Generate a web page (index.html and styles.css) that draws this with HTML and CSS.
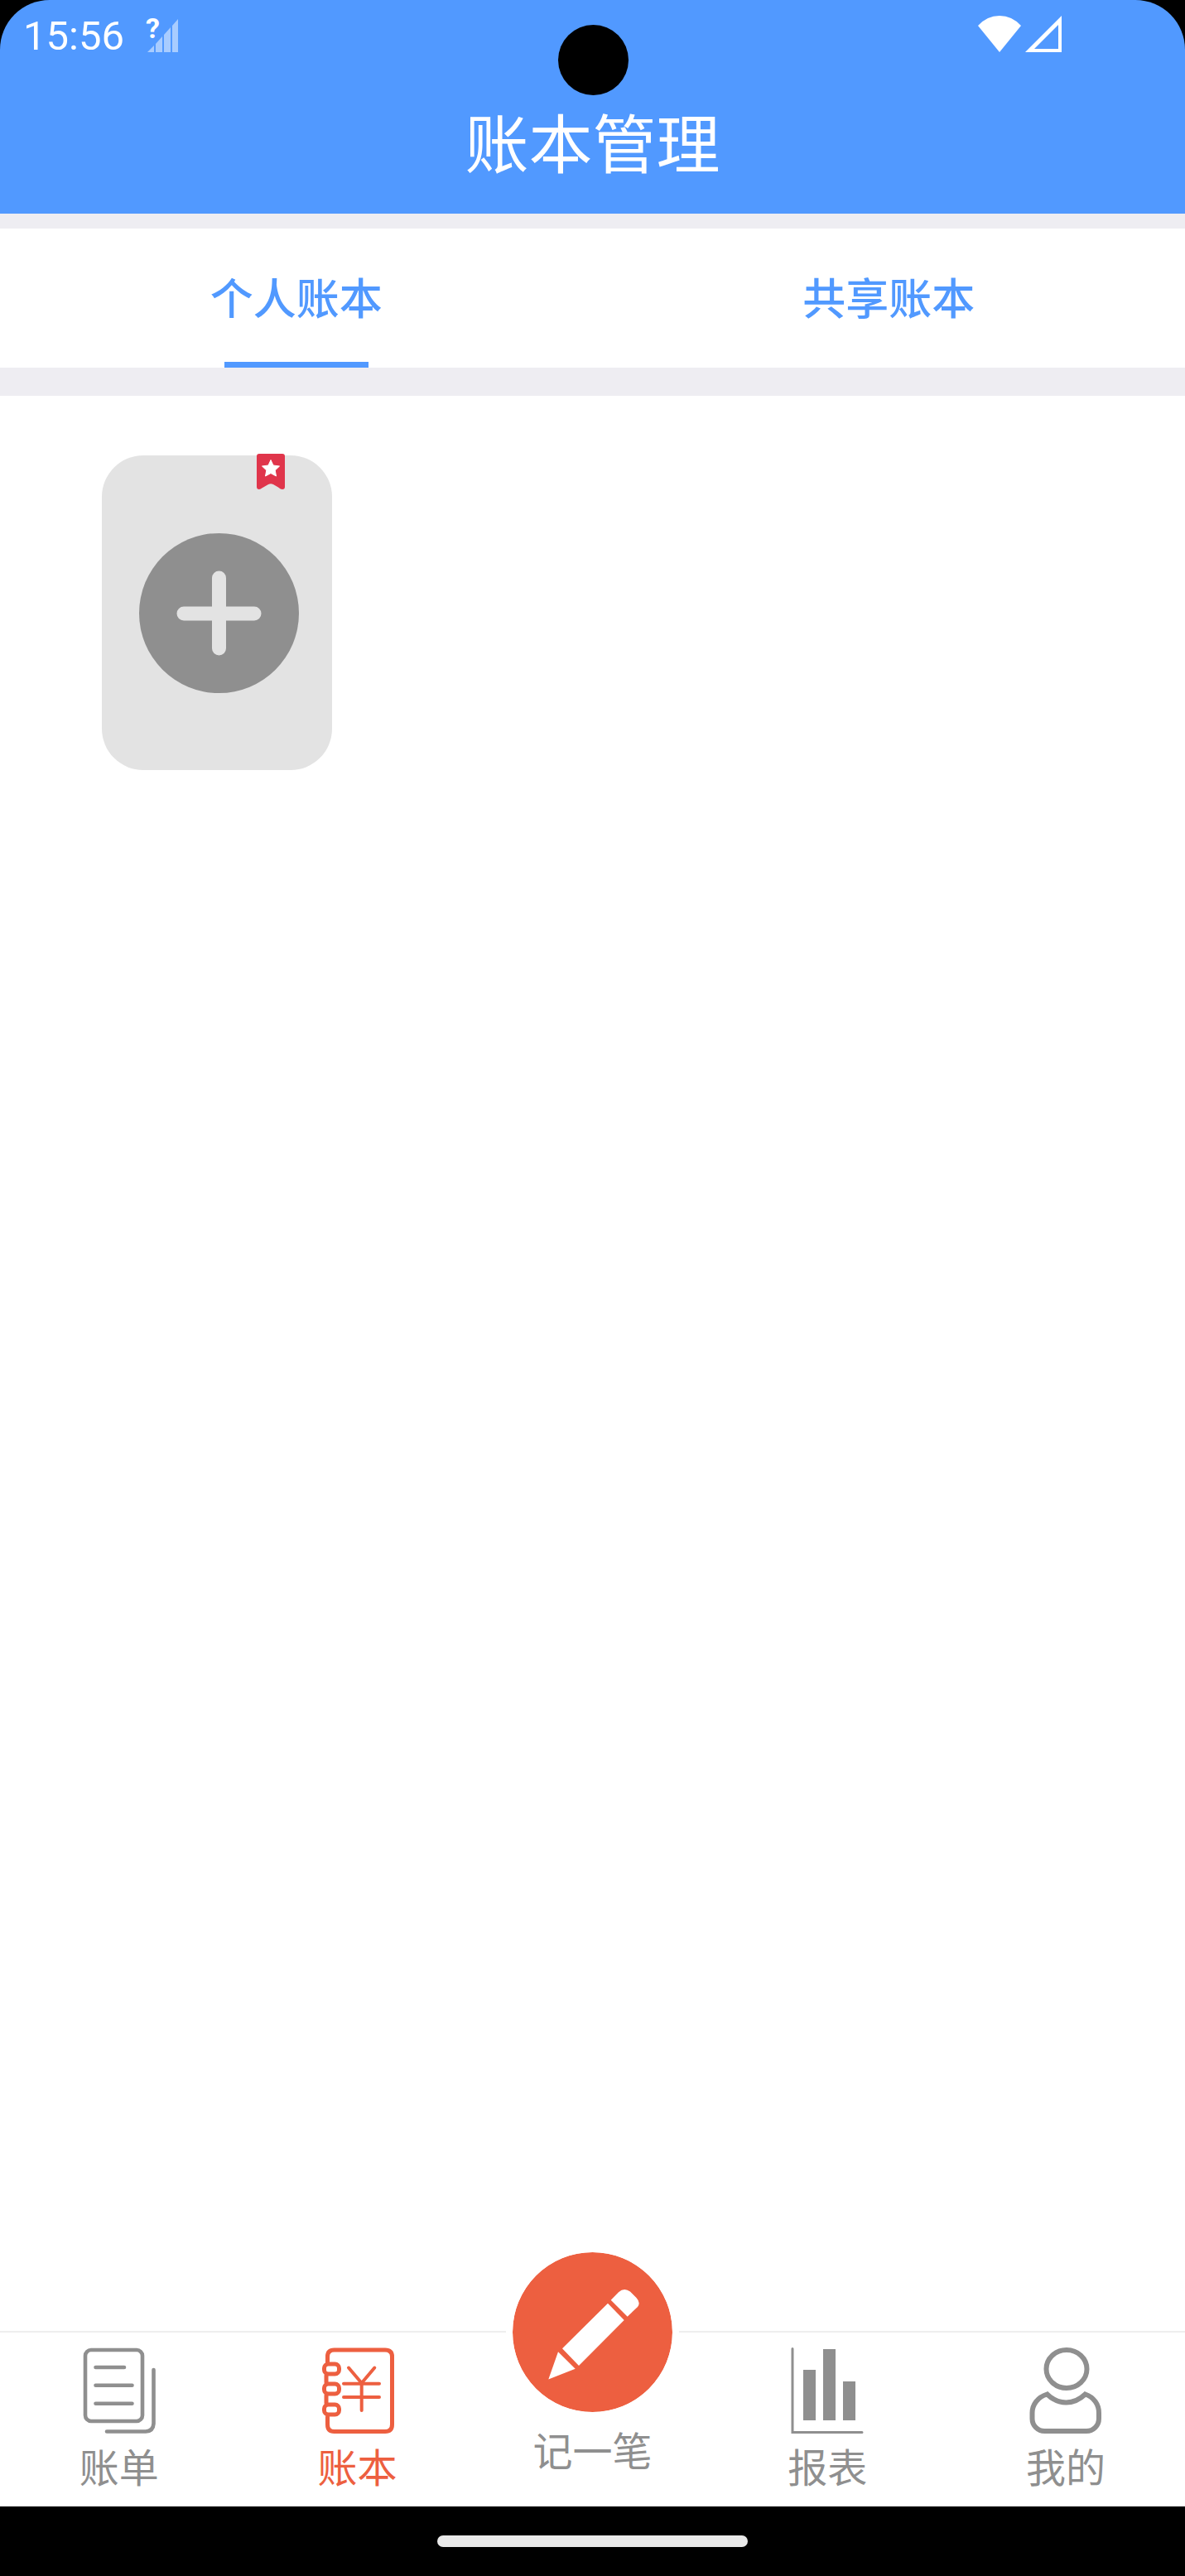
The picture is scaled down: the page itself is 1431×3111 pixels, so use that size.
FILE: index.html
```html
<!DOCTYPE html>
<html lang="zh-CN">
<head>
<meta charset="utf-8">
<meta name="viewport" content="width=device-width, initial-scale=1">
<title>账本管理</title>
<link rel="stylesheet" href="styles.css">
</head>
<body>
<header class="header">
  <div class="status">
    <div class="status-group">
      <time class="clock">15:56</time>
      <svg class="sim" viewBox="0 0 44 48" aria-hidden="true">
        <path class="sim-bars" d="M4 43 L12 35 V43Z M14 33 L22 24 V43 H14Z M24 22 L32 13 V43 H24Z M34 11 L41 3 V43 H34Z"/>
        <text class="sim-mark" x="2" y="26">?</text>
      </svg>
    </div>
    <div class="status-group status-right">
      <svg class="wifi" viewBox="0 0 52 44" aria-hidden="true"><path d="M26 44 L0 12 Q11 0 26 0 T52 12Z"/></svg>
      <svg class="cell" viewBox="0 0 44 44" aria-hidden="true"><path fill-rule="evenodd" d="M0 44 L44 0 V44Z M11 40 H40 V11Z"/></svg>
    </div>
    <span class="camera"></span>
  </div>
  <h1 class="title">账本管理</h1>
</header>

<div class="tabs" role="tablist">
  <button class="tab tab-active" type="button" role="tab" aria-selected="true">个人账本</button>
  <button class="tab" type="button" role="tab" aria-selected="false">共享账本</button>
</div>

<main class="books">
  <button class="book-add" type="button" aria-label="添加账本">
    <svg class="plus" viewBox="0 0 193 193" aria-hidden="true">
      <circle cx="96.500" cy="96.500" r="96.500"/>
      <path d="M54 97 H139 M96.500 54 V139"/>
    </svg>
    <svg class="ribbon" viewBox="0 0 34 43" aria-hidden="true">
      <path fill="#e0354b" d="M3 0 H31 Q34 0 34 3 V40 Q34 43 31 43 Q29 43 26 40.500 L20 37 Q17 35.500 14 37 L8 40.500 Q4 43 3 43 Q0 43 0 40 V3 Q0 0 3 0Z"/>
      <path fill="#fff" stroke="#fff" stroke-linejoin="round" d="M17 7.500 L20 14 L27.500 15 L22.200 20 L23.500 27 L17 23.500 L10.500 27 L11.800 20 L6.500 15 L14 14Z"/>
    </svg>
  </button>
</main>

<nav class="nav">
  <a class="nav-item" href="#bills">
    <svg class="nav-icon" viewBox="0 0 88 104" aria-hidden="true">
      <g fill="none" stroke="currentColor" stroke-width="4.600" stroke-linecap="round">
        <rect x="3" y="3" width="69" height="86" rx="7"/>
        <path d="M15.500 24 H50 M15.500 45.700 H59.500 M15.500 67.700 H59.500 M85.500 27 V92 Q85 101 76 101.500 H29"/>
      </g>
    </svg>
    <span class="nav-label">账单</span>
  </a>
  <a class="nav-item nav-active" href="#books" aria-current="page">
    <svg class="nav-icon" viewBox="0 0 88 104" aria-hidden="true">
      <g fill="none" stroke="currentColor" stroke-linecap="round">
        <path stroke-width="5" d="M7.500 18 V11 Q7.500 3 15.500 3 H77 Q85.500 3 85.500 11 V93 Q85.500 101.500 77 101.500 H15.500 Q7.500 101.500 7.500 93 V84 M6 34 V42 M6 58 V67"/>
        <rect x="3.500" y="20" width="18" height="12" rx="5" stroke-width="5"/>
        <rect x="3.500" y="44" width="18" height="12" rx="5" stroke-width="5"/>
        <rect x="3.500" y="69" width="18" height="12" rx="5" stroke-width="5"/>
        <path stroke-width="4" d="M33 24.500 L48.700 43 L64.300 24.500 M27 43.700 H70 M27 60 H70 M48.700 43 V76"/>
      </g>
    </svg>
    <span class="nav-label">账本</span>
  </a>
  <a class="nav-item nav-record" href="#record">
    <svg class="record-icon" viewBox="0 0 193 193" aria-hidden="true">
      <path fill="#fff" d="M43.300 153.500 L55 120.300 L75.700 140.700Z M60 116.300 L115 61.700 L134.700 82 L80 137Z M118.700 57.700 L128 48.300 Q134.700 42 142 47.500 L149.500 55 Q155 61 151 66 L138.700 77.700Z"/>
    </svg>
    <span class="nav-label">记一笔</span>
  </a>
  <a class="nav-item" href="#reports">
    <svg class="nav-icon" viewBox="0 0 88 104" aria-hidden="true">
      <path fill="none" stroke="currentColor" stroke-width="3" stroke-linecap="round" d="M2 1.500 V102.500 H86"/>
      <path fill="currentColor" d="M15 27 H30 V88 H15Z M39 2 H54 V88 H39Z M63 41 H78 V88 H63Z"/>
    </svg>
    <span class="nav-label">报表</span>
  </a>
  <a class="nav-item" href="#mine">
    <svg class="nav-icon" viewBox="0 0 88 104" aria-hidden="true">
      <g fill="none" stroke="currentColor" stroke-width="6">
        <ellipse cx="45" cy="26" rx="24.500" ry="23"/>
        <path d="M21.500 56.500 Q32 66.500 44.500 66.500 T67.500 56.500 C78 60 84 69 84 79 V86 A15 15 0 0 1 69 101 H18.500 A15 15 0 0 1 3.500 86 V79 C3.500 69 10 60 21.500 56.500Z"/>
      </g>
    </svg>
    <span class="nav-label">我的</span>
  </a>
</nav>

<div class="gesture"><span class="gesture-bar"></span></div>
</body>
</html>
```
FILE: styles.css
```css
* {
  box-sizing: border-box;
}

body {
  margin: 0;
  min-height: 100vh;
  display: flex;
  flex-direction: column;
  background: #000;
  font-family: "Noto Sans CJK SC", sans-serif;
}

button {
  border: 0;
  padding: 0;
  background: none;
  font: inherit;
  cursor: pointer;
}

svg {
  display: block;
  flex: none;
  overflow: visible;
}

/* Header with the device status row */
.header {
  padding-bottom: 32px;
  border-radius: 60px 60px 0 0;
  background: #5199ff;
  color: #fff;
}

.status {
  position: relative;
  display: flex;
  justify-content: space-between;
  padding: 14px 149px 0 28px;
}

.status-group {
  display: flex;
  align-items: center;
  gap: 24px;
}

.status-right {
  align-items: flex-start;
  gap: 5px;
  padding-top: 5px;
}

.clock {
  font-family: Roboto, sans-serif;
  font-size: 49px;
  line-height: 60px;
}

.sim {
  width: 44px;
  height: 48px;
}

.sim-bars {
  fill: #a8ccff;
}

.sim-mark {
  fill: #fff;
  font-family: Roboto, sans-serif;
  font-size: 34px;
  font-weight: 700;
}

.wifi {
  width: 52px;
  height: 44px;
  fill: #fff;
}

.cell {
  width: 44px;
  height: 44px;
  fill: #fff;
}

.camera {
  position: absolute;
  top: 30px;
  left: 50%;
  width: 85px;
  height: 85px;
  margin-left: -42px;
  border-radius: 50%;
  background: #000;
}

.title {
  margin: 0;
  padding-top: 40px;
  font-size: 77px;
  font-weight: 400;
  line-height: 112px;
  text-align: center;
}

/* Tabs */
.tabs {
  display: flex;
  border-top: 18px solid #eeedf2;
  border-bottom: 34px solid #eeedf2;
  background: #fff;
}

.tab {
  flex: 1;
  display: flex;
  flex-direction: column;
  align-items: center;
  color: #5199ff;
  font-size: 52px;
  font-weight: 500;
  line-height: 76px;
  padding: 44px 0 41px;
}

.tab-active::after {
  content: "";
  width: 174px;
  height: 7px;
  margin: 41px 0 -41px;
  background: #5199ff;
}

.tab::after {
  content: "";
  height: 7px;
}

/* Account books */
.books {
  flex: 1;
  padding: 72px 123px;
  background: #fff;
}

.book-add {
  position: relative;
  display: flex;
  align-items: center;
  justify-content: center;
  width: 278px;
  height: 380px;
  padding-left: 5px;
  border-radius: 50px;
  background: #e3e3e3;
}

.plus {
  width: 193px;
  height: 193px;
  fill: #8f8f8f;
  stroke-width: 17px;
  stroke-linecap: round;
}

.plus path {
  stroke: #e3e3e3;
}

.ribbon {
  position: absolute;
  top: -2px;
  right: 57px;
  width: 34px;
  height: 43px;
}

/* Bottom navigation */
.nav {
  display: grid;
  grid-template-columns: 1fr 1fr 280px 1fr 1fr;
  border-top: 2px solid #eee;
  background: #fff;
}

.nav-item {
  display: flex;
  flex-direction: column;
  align-items: center;
  gap: 8px;
  padding: 18px 0 20px;
  color: #8f8f8f;
  text-decoration: none;
}

.nav-active {
  color: #ed5f40;
}

.nav-icon {
  width: 88px;
  height: 104px;
}

.nav-label {
  font-size: 48px;
  line-height: 60px;
}

.nav-record {
  gap: 6px;
  padding: 0;
  margin-top: -105px;
}

.record-icon {
  width: 209px;
  height: 209px;
  border: 8px solid #fff;
  border-radius: 50%;
  background: #ed5f40;
  background-clip: padding-box;
}

/* Gesture bar */
.gesture {
  display: flex;
  justify-content: center;
  padding: 35px 0;
}

.gesture-bar {
  width: 375px;
  height: 14px;
  border-radius: 7px;
  background: #e9e9e9;
}
```
